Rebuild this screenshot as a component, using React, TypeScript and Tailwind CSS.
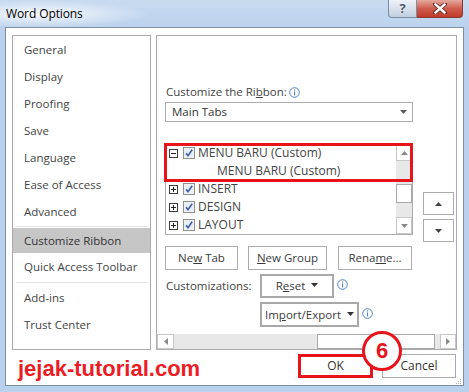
import React from 'react';

const navTop = ['General', 'Display', 'Proofing', 'Save', 'Language', 'Ease of Access', 'Advanced'];

const InfoIcon = () => (
  <svg width="11" height="11" viewBox="0 0 11 11" className="shrink-0">
    <circle cx="5.5" cy="5.5" r="4.8" fill="white" stroke="#4b84c9" strokeWidth="1" />
    <rect x="5" y="2.4" width="1.1" height="1.1" fill="#4b84c9" />
    <rect x="5" y="4.4" width="1.1" height="4" fill="#4b84c9" />
  </svg>
);

const CheckBox = () => (
  <svg width="12" height="12" viewBox="0 0 12 12" className="shrink-0">
    <rect x="0.5" y="0.5" width="11" height="11" fill="#f4f4f4" stroke="#8e8f8f" />
    <rect x="1.5" y="1.5" width="9" height="9" fill="#e9eef5" />
    <path d="M3 6.2 L5 8.6 L9.2 2.8" fill="none" stroke="#3d5fa8" strokeWidth="1.6" />
  </svg>
);

const ExpandBox = ({ open }: { open?: boolean }) => (
  <svg width="9" height="9" viewBox="0 0 9 9" className="shrink-0">
    <rect x="0.5" y="0.5" width="8" height="8" fill="white" stroke="#3c3c3c" />
    <rect x="2" y="4" width="5" height="1" fill="#222" />
    {!open && <rect x="4" y="2" width="1" height="5" fill="#222" />}
  </svg>
);

const Tri = ({ dir, color = '#606060' }: { dir: 'up' | 'down' | 'left' | 'right'; color?: string }) => {
  const d = {
    up: 'M0 4 L3.5 0 L7 4 Z',
    down: 'M0 0 L7 0 L3.5 4 Z',
    left: 'M4 0 L4 7 L0 3.5 Z',
    right: 'M0 0 L4 3.5 L0 7 Z',
  }[dir];
  const horiz = dir === 'up' || dir === 'down';
  return (
    <svg width={horiz ? 7 : 4} height={horiz ? 4 : 7} viewBox={horiz ? '0 0 7 4' : '0 0 4 7'}>
      <path d={d} fill={color} />
    </svg>
  );
};

const Btn = ({ w, children, thick }: { w: string; children: React.ReactNode; thick?: boolean }) => (
  <div
    className={`${w} h-full flex items-center justify-center bg-white text-[#3b3b3b] ${
      thick ? 'border-2 border-[#a9a9a9]' : 'border border-[#acacac]'
    }`}
  >
    {children}
  </div>
);

export default function App() {
  return (
    <div className="relative w-[469px] h-[392px] overflow-hidden bg-[#b9d1ec] font-['Segoe_UI','Open_Sans',sans-serif] text-[11.5px] text-[#444]">
      {/* title bar */}
      <div className="relative h-[27px] flex items-center pl-[6px] bg-gradient-to-b from-[#c7daf0] to-[#bcd3ed]">
        <div className="absolute left-0 top-0 w-[150px] h-[27px] bg-[radial-gradient(ellipse_at_40px_14px,rgba(255,255,255,0.85),rgba(255,255,255,0)_70%)]" />
        <span className="relative text-black text-[12px] tracking-[-0.1px]">Word Options</span>
        <div className="absolute top-0 right-[6px] flex h-[18px]">
          <div className="w-[29px] h-full rounded-bl-[4px] border border-t-0 border-[#7d8ea3] bg-gradient-to-b from-[#edf2f8] to-[#c2cfdf] flex items-center justify-center">
            <span className="text-[#4b5b70] text-[13px] font-bold leading-none [text-shadow:0_0_2px_white]">?</span>
          </div>
          <div className="w-[46px] h-full rounded-br-[4px] border border-t-0 border-l-0 border-[#8b3a32] bg-gradient-to-b from-[#e4a99f] via-[#cf5c4c] to-[#c0392b] flex items-center justify-center">
            <svg width="14" height="11" viewBox="0 0 14 11">
              <path d="M2 1 L12 10 M12 1 L2 10" stroke="#5a2620" strokeWidth="4" strokeLinecap="square" />
              <path d="M2.5 1.5 L11.5 9.5 M11.5 1.5 L2.5 9.5" stroke="white" strokeWidth="2.4" strokeLinecap="square" />
            </svg>
          </div>
        </div>
      </div>

      {/* client area */}
      <div className="mx-[5px] h-[359px] border border-[#7f8fa3] bg-white flex flex-col">
        <div className="flex gap-[5px] pt-[7px] pl-[6px]">
          {/* left nav */}
          <div className="w-[139px] h-[315px] border border-[#ababab] flex flex-col">
            {navTop.map((n) => (
              <div key={n} className="h-[27px] shrink-0 flex items-center pl-[11px]">
                {n}
              </div>
            ))}
            <div className="h-[3px] shrink-0 flex items-center px-[3px]">
              <div className="w-full h-px bg-[#e2e2e2]" />
            </div>
            <div className="h-[25px] shrink-0 flex items-center pl-[11px] bg-[#c6c6c6] text-[#333]">Customize Ribbon</div>
            <div className="h-[27px] shrink-0 flex items-center pl-[11px]">Quick Access Toolbar</div>
            <div className="h-[4px] shrink-0 flex items-center px-[3px]">
              <div className="w-full h-px bg-[#e2e2e2]" />
            </div>
            <div className="h-[27px] shrink-0 flex items-center pl-[11px]">Add-ins</div>
            <div className="h-[27px] shrink-0 flex items-center pl-[11px]">Trust Center</div>
          </div>

          {/* right panel */}
          <div className="w-[301px] h-[315px] border border-[#ababab] flex flex-col">
            <div className="flex-1 pl-[8px] pt-[48px]">
              <div className="h-[16px] flex items-center gap-[2px] pl-px">
                <span>
                  Customize the Ri<span className="underline">b</span>bon:
                </span>
                <InfoIcon />
              </div>
              <div className="mt-[2px] w-[248px] h-[20px] border border-[#acacac] flex items-center justify-between pl-[6px] pr-[5px]">
                <span className="text-[#333]">Main Tabs</span>
                <Tri dir="down" color="#5c5c5c" />
              </div>

              {/* list + move buttons */}
              <div className="mt-[21px] flex items-start">
                <div className="relative w-[248px] h-[92px] border border-[#acacac] flex">
                  <div className="flex-1 flex flex-col pl-[3px] text-[#444]">
                    <div className="h-[18px] flex items-center">
                      <ExpandBox open />
                      <span className="ml-[5px]"><CheckBox /></span>
                      <span className="ml-[3px] text-[12px]">MENU BARU (Custom)</span>
                    </div>
                    <div className="h-[18px] flex items-center pl-[48px] text-[12px]">MENU BARU (Custom)</div>
                    {['INSERT', 'DESIGN', 'LAYOUT'].map((t) => (
                      <div key={t} className="h-[18px] flex items-center">
                        <ExpandBox />
                        <span className="ml-[5px]"><CheckBox /></span>
                        <span className="ml-[3px] text-[12px]">{t}</span>
                      </div>
                    ))}
                  </div>
                  {/* vertical scrollbar */}
                  <div className="w-[16px] h-full flex flex-col bg-[#e8e8e8]">
                    <div className="h-[17px] border border-[#c8c8c8] bg-white flex items-center justify-center">
                      <Tri dir="up" color="#8a8a8a" />
                    </div>
                    <div className="mt-[23px] h-[19px] border border-[#a9a9a9] bg-white" />
                    <div className="flex-1" />
                    <div className="h-[17px] border border-[#c8c8c8] bg-white flex items-center justify-center">
                      <Tri dir="down" color="#8a8a8a" />
                    </div>
                  </div>
                  {/* annotation box */}
                  <div className="absolute left-[-2px] top-[-1px] w-[249px] h-[39px] border-[3px] border-[#e8141c]" />
                </div>
                <div className="ml-[10px] mt-[49px] flex flex-col gap-[4px]">
                  <div className="w-[31px] h-[23px] border border-[#acacac] flex items-center justify-center">
                    <Tri dir="up" color="#444" />
                  </div>
                  <div className="w-[31px] h-[23px] border border-[#acacac] flex items-center justify-center">
                    <Tri dir="down" color="#444" />
                  </div>
                </div>
              </div>

              {/* action buttons */}
              <div className="mt-[4px] h-[24px] flex">
                <Btn w="w-[73px]">
                  Ne<span className="underline">w</span>&nbsp;Tab
                </Btn>
                <div className="w-[10px]" />
                <Btn w="w-[79px]">
                  <span className="underline">N</span>ew Group
                </Btn>
                <div className="w-[11px]" />
                <Btn w="w-[74px]">
                  Rena<span className="underline">m</span>e...
                </Btn>
              </div>

              <div className="mt-[4px] h-[24px] flex items-center">
                <span className="w-[95px] pl-px">Customizations:</span>
                <Btn w="w-[74px]" thick>
                  R<span className="underline">e</span>set
                  <span className="ml-[6px] mb-[2px]"><Tri dir="down" color="#333" /></span>
                </Btn>
                <span className="ml-[3px] mb-[3px]"><InfoIcon /></span>
              </div>
              <div className="mt-[4px] h-[25px] flex items-center">
                <div className="w-[95px]" />
                <Btn w="w-[99px]" thick>
                  Im<span className="underline">p</span>ort/Export
                  <span className="ml-[6px] mb-[2px]"><Tri dir="down" color="#333" /></span>
                </Btn>
                <span className="ml-[3px] mb-[3px]"><InfoIcon /></span>
              </div>
            </div>

            {/* horizontal scrollbar */}
            <div className="h-[15px] flex bg-[#e8e8e8]">
              <div className="w-[17px] h-full border border-[#c8c8c8] bg-white flex items-center justify-center">
                <Tri dir="left" color="#8a8a8a" />
              </div>
              <div className="w-[143px]" />
              <div className="w-[118px] h-full border border-[#a9a9a9] bg-white" />
              <div className="flex-1" />
              <div className="w-[16px] h-full border border-[#c8c8c8] bg-white flex items-center justify-center">
                <Tri dir="right" color="#8a8a8a" />
              </div>
            </div>
          </div>
        </div>

        {/* bottom row */}
        <div className="mt-[4px] h-[24px] flex items-center pl-[12px] pr-[7px]">
          <span className="font-['Liberation_Sans',Arial,sans-serif] font-bold text-[22px] leading-none text-[#ec1c24] mt-[6px]">
            jejak-tutorial.com
          </span>
          <div className="flex-1" />
          <div className="w-[75px] h-full border-[3px] border-[#e8141c] bg-white flex items-center justify-center text-[#333] text-[12px]">
            OK
          </div>
          <div className="w-[9px]" />
          <div className="w-[74px] h-full border border-[#acacac] bg-white flex items-center justify-center text-[#333] text-[12px]">
            Cancel
          </div>
        </div>
        <div className="flex-1 flex justify-end items-end pr-px pb-px">
          <svg width="7" height="7" viewBox="0 0 7 7">
            <g fill="#b0b0b0">
              <rect x="5" y="1" width="1" height="1" />
              <rect x="3" y="3" width="1" height="1" />
              <rect x="5" y="3" width="1" height="1" />
              <rect x="1" y="5" width="1" height="1" />
              <rect x="3" y="5" width="1" height="1" />
              <rect x="5" y="5" width="1" height="1" />
            </g>
          </svg>
        </div>
      </div>

      {/* step marker */}
      <div className="absolute left-[362px] top-[331px] w-[40px] h-[40px] rounded-full border-[3px] border-[#e8141c] bg-white flex items-center justify-center">
        <span className="font-['Liberation_Sans',Arial,sans-serif] font-bold text-[22px] leading-none text-[#e8141c]">6</span>
      </div>
    </div>
  );
}
